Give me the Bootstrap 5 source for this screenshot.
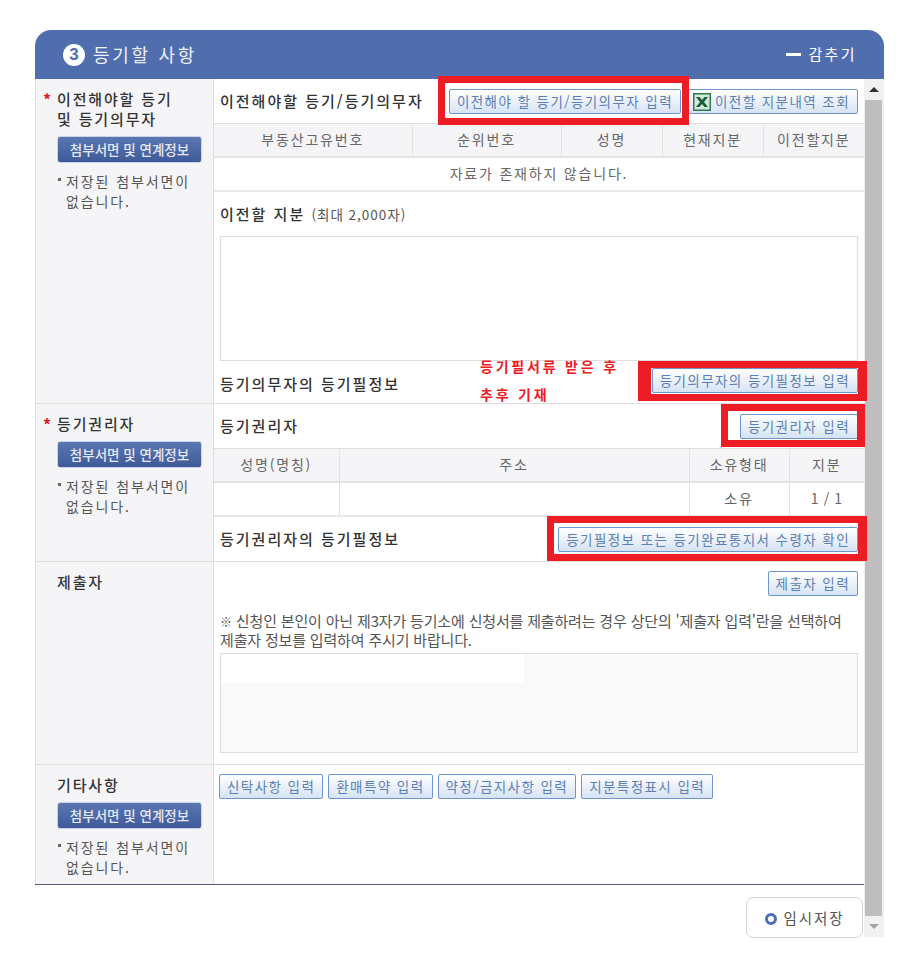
<!DOCTYPE html>
<html lang="ko">
<head>
<meta charset="utf-8">
<title>등기할 사항</title>
<link rel="stylesheet" href="https://cdn.jsdelivr.net/npm/bootstrap@5.3.0/dist/css/bootstrap.min.css">
<style>
html,body{background:#fff;}
body{font-family:"Noto Sans CJK KR","Liberation Sans",sans-serif;font-size:14px;color:#444;}
.stage{position:relative;width:900px;height:954px;padding:30px 16px 0 35px;overflow:hidden;}
.panel-head{height:49px;background:#506eae;border-radius:16px 16px 0 0;color:#fff;padding:0 28px 0 28px;}
.num-badge{width:22px;height:22px;border-radius:50%;background:#fff;color:#506eae;font-weight:700;font-size:17px;line-height:22px;text-align:center;font-family:"Liberation Sans",sans-serif;}
.panel-title{font-size:18px;letter-spacing:2.7px;margin-left:8px;color:#eef1f8;}
.fold-bar{width:15px;height:3px;background:#fff;margin-right:7px;}
.fold-text{font-size:15px;letter-spacing:2.4px;margin-right:-1px;}
.left-col{width:179px;flex:none;background:#f5f5f8;border-left:1px solid #ddd;border-right:1px solid #ddd;padding:0 11px 0 21px;position:relative;}
.right-col{flex:1 1 auto;min-width:0;background:#fff;}
.form-row{border-bottom:1px solid #ddd;}
.h-a{height:325px;}
.h-b{height:158px;}
.h-c{height:203px;}
.h-d{height:120px;border-bottom:1px solid #5a5a6e;}
.content-col{width:829px;flex:none;}
.sect-title{font-size:15px;line-height:20px;color:#333;letter-spacing:1.85px;font-weight:500;padding-top:10px;position:relative;white-space:nowrap;}
.req::before{content:"*";position:absolute;left:-14px;top:10px;color:#e8161e;font-weight:700;font-size:16px;}
.attach-btn{display:block;width:145px;height:27px;padding:0;font-size:13.5px;line-height:25px;color:#e4e9f5;font-weight:500;background:linear-gradient(#5a77b2,#3f5a99);border:1px solid #c9d2e6;border-radius:3px;margin-top:7px;letter-spacing:0;}
.attach-note{position:relative;margin-top:8px;padding-left:9px;font-size:14px;line-height:20px;color:#555;letter-spacing:1.9px;white-space:nowrap;}
.attach-note::before{content:"";position:absolute;left:1px;top:7px;width:3px;height:3px;background:#666;}
.bar{padding:0 6px;}
.bar-a{height:44px;}
.bar-b{height:44px;}
.bar-c{height:46px;}
.bar-d{height:42px;}
.bar-title{font-size:15px;font-weight:500;color:#333;letter-spacing:2px;}
.bar-d .bar-title{padding-top:6px;}
.bar-d .in-btn{margin-bottom:3px;}
.bar-c .in-btn{margin-bottom:1px;}
.btn-pair{gap:7px;}
.in-btn{height:25px;padding:0 7px;font-size:13.5px;line-height:23px;color:#5c80b5;background:linear-gradient(#fff,#d6e3f4);border:1px solid #6d96cf;border-radius:2px;letter-spacing:1.42px;white-space:nowrap;}
.in-btn:hover{color:#5c80b5;border-color:#6d96cf;}
.xl-ic{width:18px;height:18px;vertical-align:-4px;margin-right:4px;}
.grid-t{table-layout:fixed;width:100%;margin:0;--bs-table-bg:transparent;border-color:#ddd;}
.grid-t th,.grid-t td{padding:0;text-align:center;vertical-align:middle;font-weight:400;font-size:14px;color:#666;border:solid #e2e2e2;border-width:0 1px 1px 0;letter-spacing:1.8px;box-shadow:none;}
.grid-t th{background:#f5f5f8;border-top:1px solid #ddd;border-bottom:2px solid #e2e2e2;height:33px;}
.grid-t th:last-child,.grid-t td:last-child{border-right:0;}
.grid-t td{height:34px;border-bottom:2px solid #e8e8e8;}
.grid-t td.share-val{letter-spacing:.6px;}
.c198{width:198px;}.c149{width:149px;}.c101{width:101px;}.c100{width:100px;}.c125{width:125px;}.c350{width:350px;}.c75{width:75px;}
.sub-label{padding:12px 6px 0;line-height:20px;height:44px;font-size:15px;font-weight:500;color:#333;letter-spacing:2px;}
.sub-label small{font-weight:400;font-size:13.5px;color:#555;letter-spacing:1px;}
.memo{display:block;width:638px;height:125px;margin-left:6px;border:1px solid #ddd;border-radius:0;padding:4px;resize:none;box-shadow:none;}
.notice{padding:3px 6px 0;font-size:15px;line-height:19px;color:#555;letter-spacing:-.17px;height:45px;white-space:nowrap;margin:0;}
.notice-mark{font-size:12px;line-height:1;font-weight:700;}
.sub-box{width:638px;height:100px;margin-left:6px;background:#f9f9f9;border:1px solid #ddd;}
.sub-patch{width:303px;height:29px;background:#fff;}
.submit-top{padding:9px 6px 0 0;height:46px;}
.btn-list{padding:9px 5px;gap:5px;}
.save-area{height:53px;padding:12px 1px 0 0;}
.save-btn{width:117px;height:41px;padding:0;background:#fff;border:1px solid #d4d4d4;border-radius:7px;color:#555;font-size:14.5px;letter-spacing:1.9px;}
.save-btn:hover{background:#fff;border-color:#d4d4d4;color:#555;}
.ring{display:inline-block;width:12px;height:12px;border-radius:50%;border:3.5px solid #4f6fb5;margin-right:7px;vertical-align:-1px;}
.sbar{width:20px;flex:none;height:858px;background:#f1f1f1;}
.sb-btn{height:21px;}
.sb-thumb{flex:1 1 auto;background:#bebebe;margin:0 2px 0 1px;}
.arr-up{width:0;height:0;border:5px solid transparent;border-top:0;border-bottom:5px solid #333;}
.arr-dn{width:0;height:0;border:5px solid transparent;border-bottom:0;border-top:5px solid #a3a3a3;}
.red-frame{position:absolute;border:solid #ee1c25;pointer-events:none;}
.mk1{left:438px;top:76px;width:251px;height:49px;border-width:7px;}
.mk2{left:638px;top:361px;width:229px;height:40px;border-width:7px 9px 7px 13px;}
.mk3{left:721px;top:404px;width:144px;height:43px;border-width:7px 8px 7px 7px;}
.mk4{left:547px;top:516px;width:320px;height:45px;border-width:7px 9px 7px 7px;}
.red-note{position:absolute;left:480px;top:352px;color:#ee1c25;font-size:14px;font-weight:700;line-height:28px;letter-spacing:2.8px;margin:0;}
</style>
</head>
<body>
<div class="stage">
  <div class="panel-head d-flex align-items-center">
    <span class="num-badge">3</span>
    <span class="panel-title">등기할 사항</span>
    <span class="ms-auto d-flex align-items-center"><span class="fold-bar"></span><span class="fold-text">감추기</span></span>
  </div>
  <div class="d-flex align-items-start">
    <div class="content-col">
      <div class="d-flex form-row h-a">
        <div class="left-col">
          <div class="sect-title req">이전해야할 등기<br>및 등기의무자</div>
          <button type="button" class="btn attach-btn">첨부서면 및 연계정보</button>
          <div class="attach-note">저장된 첨부서면이<br>없습니다.</div>
        </div>
        <div class="right-col">
          <div class="bar bar-a d-flex align-items-center">
            <span class="bar-title">이전해야할 등기/등기의무자</span>
            <span class="ms-auto d-flex btn-pair">
              <button type="button" class="btn in-btn">이전해야 할 등기/등기의무자 입력</button>
              <button type="button" class="btn in-btn ps-1"><svg class="xl-ic" viewBox="0 0 18 18"><rect x=".75" y=".75" width="16.500" height="16.500" fill="#d5e7da" stroke="#2d7a52" stroke-width="1.500"/><path d="M3 4h3.500L9 7l2.500-3H15l-4 5 4 5h-3.500L9 11l-2.500 3H3l4-5z" fill="#17603a"/></svg>이전할 지분내역 조회</button>
            </span>
          </div>
          <table class="table grid-t">
            <colgroup><col class="c198"><col class="c149"><col class="c101"><col class="c101"><col></colgroup>
            <thead><tr><th>부동산고유번호</th><th>순위번호</th><th>성명</th><th>현재지분</th><th>이전할지분</th></tr></thead>
            <tbody><tr><td colspan="5">자료가 존재하지 않습니다.</td></tr></tbody>
          </table>
          <div class="sub-label">이전할 지분 <small>(최대 2,000자)</small></div>
          <textarea class="form-control memo" aria-label="이전할 지분"></textarea>
          <div class="bar bar-d d-flex align-items-center">
            <span class="bar-title">등기의무자의 등기필정보</span>
            <button type="button" class="btn in-btn ms-auto">등기의무자의 등기필정보 입력</button>
          </div>
        </div>
      </div>
      <div class="d-flex form-row h-b">
        <div class="left-col">
          <div class="sect-title req">등기권리자</div>
          <button type="button" class="btn attach-btn">첨부서면 및 연계정보</button>
          <div class="attach-note">저장된 첨부서면이<br>없습니다.</div>
        </div>
        <div class="right-col">
          <div class="bar bar-b d-flex align-items-center">
            <span class="bar-title">등기권리자</span>
            <button type="button" class="btn in-btn ms-auto">등기권리자 입력</button>
          </div>
          <table class="table grid-t">
            <colgroup><col class="c125"><col class="c350"><col class="c100"><col></colgroup>
            <thead><tr><th>성명(명칭)</th><th>주소</th><th>소유형태</th><th>지분</th></tr></thead>
            <tbody><tr><td></td><td></td><td>소유</td><td class="share-val">1 / 1</td></tr></tbody>
          </table>
          <div class="bar bar-c d-flex align-items-center">
            <span class="bar-title">등기권리자의 등기필정보</span>
            <button type="button" class="btn in-btn ms-auto">등기필정보 또는 등기완료통지서 수령자 확인</button>
          </div>
        </div>
      </div>
      <div class="d-flex form-row h-c">
        <div class="left-col">
          <div class="sect-title">제출자</div>
        </div>
        <div class="right-col">
          <div class="submit-top d-flex justify-content-end">
            <button type="button" class="btn in-btn">제출자 입력</button>
          </div>
          <p class="notice"><span class="notice-mark">※</span> 신청인 본인이 아닌 제3자가 등기소에 신청서를 제출하려는 경우 상단의 '제출자 입력'란을 선택하여<br>제출자 정보를 입력하여 주시기 바랍니다.</p>
          <div class="sub-box"><div class="sub-patch"></div></div>
        </div>
      </div>
      <div class="d-flex form-row h-d">
        <div class="left-col">
          <div class="sect-title">기타사항</div>
          <button type="button" class="btn attach-btn">첨부서면 및 연계정보</button>
          <div class="attach-note">저장된 첨부서면이<br>없습니다.</div>
        </div>
        <div class="right-col">
          <div class="d-flex btn-list">
            <button type="button" class="btn in-btn">신탁사항 입력</button>
            <button type="button" class="btn in-btn">환매특약 입력</button>
            <button type="button" class="btn in-btn">약정/금지사항 입력</button>
            <button type="button" class="btn in-btn">지분특정표시 입력</button>
          </div>
        </div>
      </div>
      <div class="save-area d-flex justify-content-end">
        <button type="button" class="btn save-btn"><span class="ring"></span>임시저장</button>
      </div>
    </div>
    <div class="sbar d-flex flex-column">
      <div class="sb-btn d-flex align-items-center justify-content-center"><span class="arr-up"></span></div>
      <div class="sb-thumb"></div>
      <div class="sb-btn d-flex align-items-center justify-content-center"><span class="arr-dn"></span></div>
    </div>
  </div>
  <div class="red-frame mk1"></div>
  <div class="red-frame mk2"></div>
  <div class="red-frame mk3"></div>
  <div class="red-frame mk4"></div>
  <p class="red-note">등기필서류 받은 후<br>추후 기재</p>
</div>
<script src="https://cdn.jsdelivr.net/npm/bootstrap@5.3.0/dist/js/bootstrap.bundle.min.js"></script>
</body>
</html>
